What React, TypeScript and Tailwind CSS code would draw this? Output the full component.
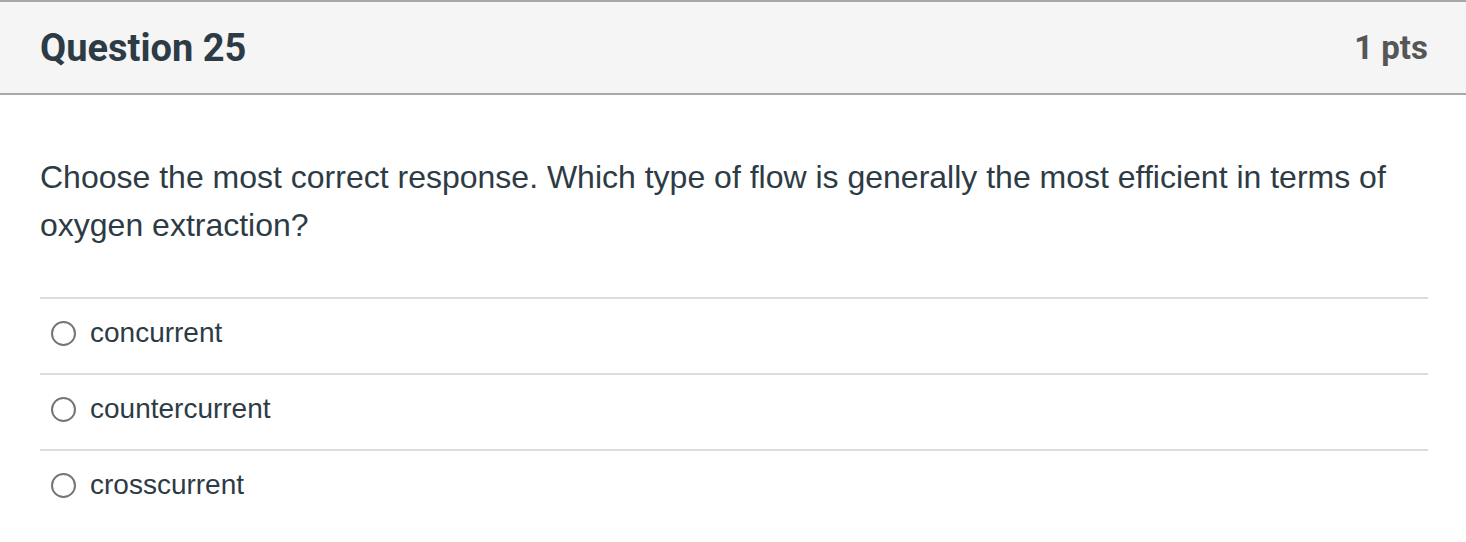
export default function App() {
  const answers = ['concurrent', 'countercurrent', 'crosscurrent']

  return (
    <div className="w-[1466px] h-[542px] bg-white overflow-hidden">
      {/* Question header */}
      <div className="flex items-center justify-between h-[95px] pl-10 pr-[38px] bg-[#f5f5f5] border-t-2 border-b-2 border-[#a8a8a8]">
        <h2
          className="text-[38px] font-bold text-[#2d3b45] leading-none"
          style={{ fontFamily: 'Roboto, "Noto Sans", sans-serif' }}
        >
          Question 25
        </h2>
        <span
          className="text-[33px] font-bold text-[#565656] leading-none"
          style={{ fontFamily: 'Roboto, "Noto Sans", sans-serif' }}
        >
          1 pts
        </span>
      </div>

      {/* Question body */}
      <div className="pl-10 pr-[38px]" style={{ fontFamily: '"Liberation Sans", Arial, sans-serif' }}>
        <p className="mt-[58px] text-[32px] leading-[48px] text-[#2d3b45]">
          Choose the most correct response. Which type of flow is generally the most efficient in terms of oxygen extraction?
        </p>

        <div className="mt-12">
          {answers.map((a) => (
            <label
              key={a}
              className="flex items-center h-[76px] pb-[6px] border-t-2 border-[#dcdcdc] pl-[11px]"
            >
              <span className="w-[25px] h-[25px] rounded-full border-2 border-[#757575] bg-white shrink-0" />
              <span className="ml-[14px] text-[28px] text-[#2d3b45]">{a}</span>
            </label>
          ))}
        </div>
      </div>
    </div>
  )
}
